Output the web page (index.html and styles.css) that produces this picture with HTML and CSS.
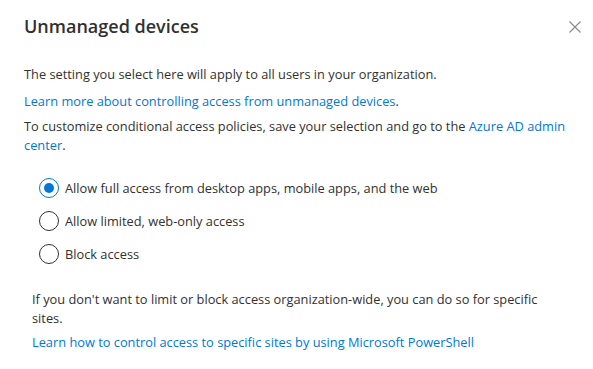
FILE: index.html
```html
<!DOCTYPE html>
<html lang="en">
<head>
<meta charset="utf-8">
<title>Unmanaged devices</title>
<link rel="stylesheet" href="styles.css">
</head>
<body>
<div class="panel">
  <div class="header">
    <h1 class="title">Unmanaged devices</h1>
    <button class="close" aria-label="Close">
      <svg width="12" height="12" viewBox="0 0 12 12"><path d="M0.5 0.5 L11.5 11.5 M11.5 0.5 L0.5 11.5" stroke="#8a8886" stroke-width="1.1" fill="none"/></svg>
    </button>
  </div>
  <div class="content">
    <p class="text p1">The setting you select here will apply to all users in your organization.</p>
    <p class="text p2"><a class="link" href="#">Learn more about controlling access from unmanaged devices</a>.</p>
    <p class="text p3">To customize conditional access policies, save your selection and go to the <a class="link" href="#">Azure AD admin center</a>.</p>
    <div class="choices">
      <label class="choice"><span class="radio checked"></span><span class="choice-label">Allow full access from desktop apps, mobile apps, and the web</span></label>
      <label class="choice"><span class="radio"></span><span class="choice-label">Allow limited, web-only access</span></label>
      <label class="choice"><span class="radio"></span><span class="choice-label">Block access</span></label>
    </div>
    <div class="note">
      <p class="text">If you don't want to limit or block access organization-wide, you can do so for specific sites.</p>
      <p class="text note-link"><a class="link" href="#">Learn how to control access to specific sites by using Microsoft PowerShell</a></p>
    </div>
  </div>
</div>
</body>
</html>
```
FILE: styles.css
```css
html, body {
  margin: 0;
  padding: 0;
  background: #ffffff;
}
body {
  font-family: "Open Sans", "Noto Sans", sans-serif;
  color: #323130;
}
.panel {
  width: 593px;
  height: 369px;
  box-sizing: border-box;
}
.header {
  display: flex;
  align-items: center;
  justify-content: space-between;
  padding: 12px 12px 0 24px;
  height: 28px;
}
.title {
  margin: 0;
  font-size: 18px;
  font-weight: 600;
  line-height: 28px;
  color: #323130;
}
.close {
  border: 0;
  background: transparent;
  padding: 0;
  width: 12px;
  height: 12px;
  display: flex;
  align-items: center;
  justify-content: center;
  margin-top: 1px;
}
.content {
  padding: 0 24px;
  width: 545px;
}
.text {
  margin: 0;
  font-size: 12.8px;
  line-height: 19px;
}
.p1 { margin-top: 25px; }
.p2 { margin-top: 8px; }
.p3 { margin-top: 6px; }
.link {
  color: #0078d4;
  text-decoration: none;
}
.choices {
  margin-top: 23px;
  padding-left: 15px;
  display: flex;
  flex-direction: column;
  gap: 13px;
}
.choice {
  display: flex;
  align-items: center;
  height: 20px;
  font-size: 12.8px;
  line-height: 19px;
}
.radio {
  width: 20px;
  height: 20px;
  box-sizing: border-box;
  border: 1px solid #323130;
  border-radius: 50%;
  margin-right: 6px;
  flex: none;
  position: relative;
}
.radio.checked {
  border-color: #0078d4;
}
.radio.checked::after {
  content: "";
  position: absolute;
  left: 4px;
  top: 4px;
  width: 10px;
  height: 10px;
  border-radius: 50%;
  background: #0078d4;
}
.note {
  margin-top: 26px;
  padding: 0 8px;
}
.note-link { margin-top: 5px; }
```
